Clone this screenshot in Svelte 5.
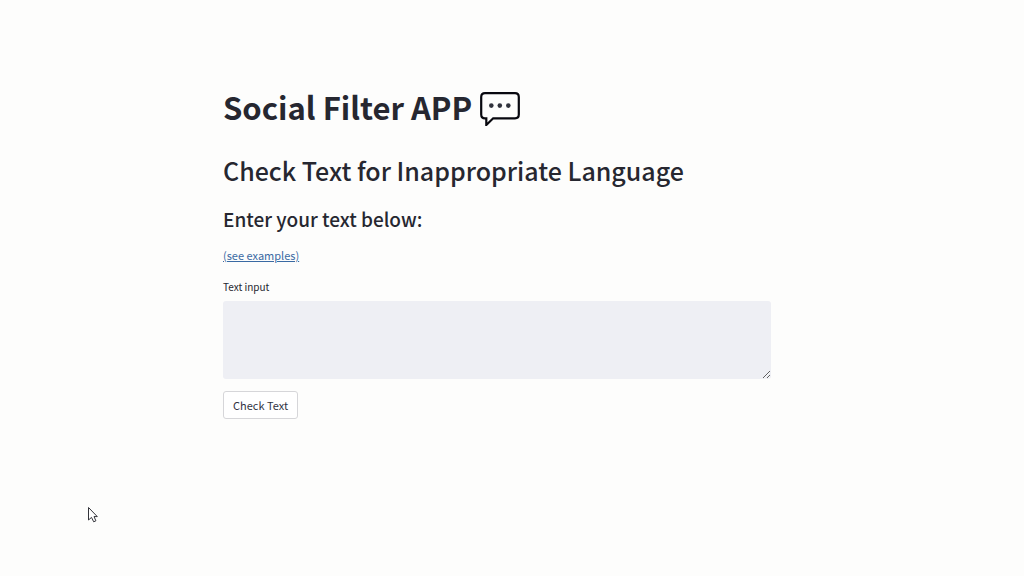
<script>
  let text = $state('');

  function handleSubmit(e) {
    e.preventDefault();
  }
</script>

<main class="page">
  <div class="container">
    <h1>
      <span>Social Filter APP</span>
      <svg class="bubble" viewBox="0 -4 40 38" aria-hidden="true">
        <path
          d="M5 1.2H35Q38.8 1.2 38.8 5V22.5Q38.8 26.3 35 26.3H13.2L6.3 33V26.3H5Q1.2 26.3 1.2 22.5V5Q1.2 1.2 5 1.2Z"
          fill="none"
          stroke="#08080f"
          stroke-width="2.2"
        />
        <circle cx="11.3" cy="13.6" r="2.3" fill="#30323c" />
        <circle cx="19.8" cy="13.6" r="2.3" fill="#30323c" />
        <circle cx="28.3" cy="13.6" r="2.3" fill="#30323c" />
      </svg>
    </h1>
    <h2>Check Text for Inappropriate Language</h2>
    <h3>Enter your text below:</h3>
    <a class="examples" href="#examples">(see examples)</a>

    <form onsubmit={handleSubmit}>
      <label for="text-input">Text input</label>
      <textarea id="text-input" bind:value={text}></textarea>
      <button type="submit">Check Text</button>
    </form>
  </div>

  <svg class="cursor" viewBox="0 0 12 18" aria-hidden="true">
    <path
      d="M1.5 1.5V14L4.5 11.4L6.7 15.8L8.9 14.8L7 10.6H10.3Z"
      fill="#fff"
      stroke="#33343a"
      stroke-width="1"
    />
  </svg>
</main>

<style>
  :global(body) {
    margin: 0;
    background: #fdfdfc;
  }
  .page {
    position: relative;
    box-sizing: border-box;
    min-height: 100vh;
    padding: 83px 30px 40px 0;
    font-family: "Source Sans Pro", "Noto Sans CJK JP", sans-serif;
    color: #262730;
  }
  .container {
    max-width: 548px;
    margin: 0 auto;
  }
  h1, h2, h3 {
    margin: 0;
  }
  h1 {
    display: flex;
    align-items: center;
    gap: 8px;
    font-size: 31px;
    font-weight: 700;
    line-height: 48px;
  }
  .bubble {
    width: 40px;
    height: 38px;
  }
  h2 {
    margin-top: 22px;
    font-size: 25px;
    font-weight: 500;
    line-height: 34px;
  }
  h3 {
    margin-top: 18px;
    font-size: 19px;
    font-weight: 500;
    line-height: 28px;
  }
  .examples {
    display: inline-block;
    margin-top: 12px;
    font-size: 11px;
    line-height: 20px;
    color: #3a6aa3;
  }

  form {
    display: flex;
    flex-direction: column;
    align-items: flex-start;
    margin-top: 12px;
  }
  label {
    font-size: 10px;
    line-height: 20px;
    margin-bottom: 4px;
  }
  textarea {
    box-sizing: border-box;
    width: 100%;
    height: 78px;
    padding: 12px;
    border: none;
    border-radius: 3px;
    background: #eeeff4;
    color: inherit;
    font: inherit;
    font-size: 11px;
    resize: vertical;
  }
  textarea:focus {
    outline: 1px solid #ff4b4b;
  }
  button {
    margin-top: 12px;
    padding: 3px 9px;
    border: 1px solid #d6d6d9;
    border-radius: 3px;
    background: #fff;
    color: #31333f;
    font-family: inherit;
    font-size: 11px;
    line-height: 20px;
    cursor: pointer;
  }
  button:hover {
    border-color: #ff4b4b;
    color: #ff4b4b;
  }

  .cursor {
    position: absolute;
    top: 506px;
    left: 87px;
    width: 12px;
    height: 18px;
    pointer-events: none;
  }
</style>
